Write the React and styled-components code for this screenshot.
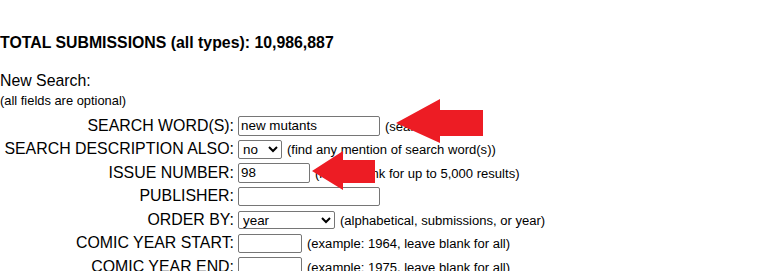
import React from "react";
import styled, { createGlobalStyle } from "styled-components";

const GlobalStyle = createGlobalStyle`
  body {
    margin: 0;
    background: #fff;
    color: #000;
    font-family: "Liberation Sans", Arial, sans-serif;
  }
`;

const rows = [
  { label: "SEARCH WORD(S):", kind: "text", width: 142, value: "new mutants", note: "(search terms)" },
  { label: "SEARCH DESCRIPTION ALSO:", kind: "select", width: 44, options: ["no", "yes"], note: "(find any mention of search word(s))" },
  { label: "ISSUE NUMBER:", kind: "text", width: 72, value: "98", note: "(leave blank for up to 5,000 results)" },
  { label: "PUBLISHER:", kind: "text", width: 142, value: "" },
  { label: "ORDER BY:", kind: "select", width: 97, options: ["year", "alphabetical", "submissions"], note: "(alphabetical, submissions, or year)" },
  { label: "COMIC YEAR START:", kind: "text", width: 64, value: "", note: "(example: 1964, leave blank for all)" },
  { label: "COMIC YEAR END:", kind: "text", width: 64, value: "", note: "(example: 1975, leave blank for all)" },
];

export default function App() {
  const renderField = (row) => {
    if (row.kind === "select") {
      return (
        <Select $w={row.width} defaultValue={row.options[0]}>
          {row.options.map((o) => (
            <option key={o}>{o}</option>
          ))}
        </Select>
      );
    }
    return <TextInput type="text" $w={row.width} defaultValue={row.value} />;
  };

  return (
    <Page>
      <GlobalStyle />
      <Heading>TOTAL SUBMISSIONS (all types): 10,986,887</Heading>
      <NewSearch>New Search:</NewSearch>
      <Optional>(all fields are optional)</Optional>
      <Form>
        {rows.map((row) => (
          <React.Fragment key={row.label}>
            <Label>{row.label}</Label>
            <Field>
              {renderField(row)}
              {row.note && <Note>{row.note}</Note>}
            </Field>
          </React.Fragment>
        ))}
      </Form>
      <Arrows viewBox="0 0 781 271" aria-hidden="true">
        <polygon points="396,123 440,99 440,110 483,110 483,136 440,136 440,143" />
        <polygon points="312,171 343,151 343,160 375,160 375,183 343,183 343,190" />
      </Arrows>
    </Page>
  );
}

const Page = styled.div`
  position: relative;
  padding-top: 33.6px;
  height: 271px;
  box-sizing: border-box;
  overflow: hidden;
`;

const Heading = styled.div`
  font-size: 15.85px;
  font-weight: bold;
  line-height: 18px;
`;

const NewSearch = styled.div`
  margin-top: 20.8px;
  font-size: 15.85px;
  line-height: 18px;
`;

const Optional = styled.div`
  margin-top: 2.2px;
  font-size: 12.9px;
  line-height: 15px;
`;

const Form = styled.div`
  margin-top: 7.6px;
  display: grid;
  grid-template-columns: 234px auto;
  grid-auto-rows: 21.5px;
  column-gap: 4px;
  row-gap: 2px;
`;

const Label = styled.div`
  display: flex;
  align-items: center;
  justify-content: flex-end;
  font-size: 15.9px;
  line-height: 18px;
  white-space: nowrap;
`;

const Field = styled.div`
  display: flex;
  align-items: center;
  gap: 5px;
`;

const TextInput = styled.input`
  box-sizing: border-box;
  width: ${({ $w }) => $w}px;
  height: 19.5px;
  margin: 0;
  padding: 1px 2px;
  border: 1px solid #767676;
  border-radius: 2px;
  font-family: "Liberation Sans", Arial, sans-serif;
  font-size: 13.4px;
  color: #000;
  background: #fff;
`;

const Select = styled.select`
  box-sizing: border-box;
  width: ${({ $w }) => $w}px;
  height: 18.5px;
  margin: 0;
  border: 1px solid #767676;
  border-radius: 2px;
  font-family: "Liberation Sans", Arial, sans-serif;
  font-size: 13.4px;
  color: #000;
  background: #fff;
`;

const Note = styled.span`
  font-size: 13.05px;
  line-height: 15px;
  padding-top: 1px;
  white-space: nowrap;
`;

const Arrows = styled.svg`
  position: absolute;
  top: 0;
  left: 0;
  width: 781px;
  height: 271px;
  pointer-events: none;
  fill: #ed1c24;
`;
